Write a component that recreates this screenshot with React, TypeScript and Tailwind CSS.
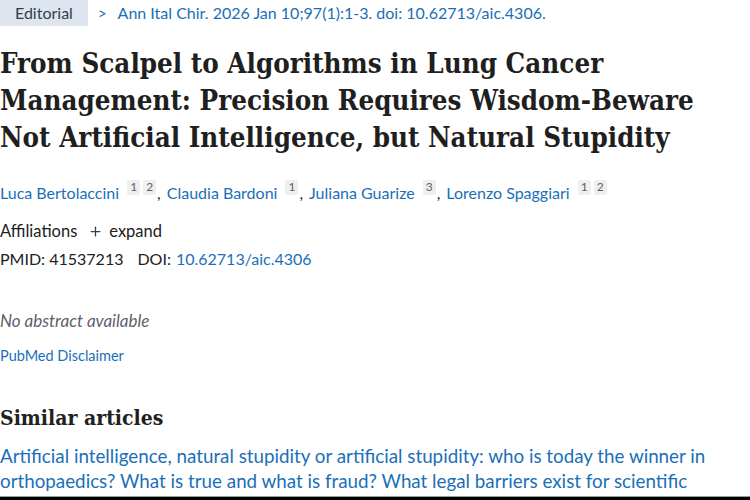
import { Plus } from 'lucide-react';

const authors = [
  { name: 'Luca Bertolaccini', refs: ['1', '2'] },
  { name: 'Claudia Bardoni', refs: ['1'] },
  { name: 'Juliana Guarize', refs: ['3'] },
  { name: 'Lorenzo Spaggiari', refs: ['1', '2'] },
];

function Sup({ n, first }: { n: string; first: boolean }) {
  return (
    <span
      className={`inline-flex items-center justify-center w-[13px] h-[15px] ${first ? 'ml-[8px]' : 'ml-[3px]'} bg-[#efefef] text-[#5b616b] text-[12px] leading-none rounded-[2px] relative -top-[6px]`}
    >
      {n}
    </span>
  );
}

export default function App() {
  return (
    <div className="relative w-[750px] h-[500px] overflow-hidden bg-white text-[#212121] font-['Lato','Liberation_Sans',sans-serif]">
      <div className="flex items-center h-[26px] text-[16px]">
        <span className="h-full flex items-center px-[15px] bg-[#dfe5ee] text-[#2f3e4f]">Editorial</span>
        <span className="ml-[10px] text-[#1a6fb8] flex items-center">
          <span className="mr-[11px] text-[15px]">&gt;</span>
          Ann Ital Chir. 2026 Jan 10;97(1):1-3. doi: 10.62713/aic.4306.
        </span>
      </div>

      <h1 className="mt-[19px] font-['DejaVu_Serif_Condensed','DejaVu_Serif',serif] [font-stretch:condensed] font-bold text-[27.5px] leading-[37px] text-[#1f1f1f]">
        From Scalpel to Algorithms in Lung Cancer
        <br />
        Management: Precision Requires Wisdom-Beware
        <br />
        Not Artificial Intelligence, but Natural Stupidity
      </h1>

      <div className="mt-[25px] text-[16px] text-[#1a6fb8] flex items-center">
        {authors.map((a, i) => (
          <span key={a.name} className="flex items-center">
            <span>{a.name}</span>
            {a.refs.map((r, j) => (
              <Sup key={r} n={r} first={j === 0} />
            ))}
            {i < authors.length - 1 && <span className="text-[#212121] ml-[1px] mr-[6px]">,</span>}
          </span>
        ))}
      </div>

      <div className="mt-[14px] flex items-center text-[16.5px] leading-[24px]">
        <span>Affiliations</span>
        <Plus className="ml-[11px] mr-[6px] w-[15px] h-[15px] text-[#3d3d3d]" strokeWidth={2} />
        <span>expand</span>
      </div>

      <div className="mt-[4px] flex items-center text-[16px] leading-[24px]">
        <span>PMID: 41537213</span>
        <span className="ml-[14px]">DOI:</span>
        <span className="ml-[5px] text-[#1a6fb8]">10.62713/aic.4306</span>
      </div>

      <p className="mt-[38px] italic text-[17px] leading-[24px] text-[#5b616b]">No abstract available</p>

      <p className="mt-[13px] text-[14.5px] leading-[20px] text-[#1a6fb8]">PubMed Disclaimer</p>

      <h2 className="mt-[37px] font-['DejaVu_Serif_Condensed','DejaVu_Serif',serif] [font-stretch:condensed] font-bold text-[21px] leading-[30px]">
        Similar articles
      </h2>

      <p className="mt-[10px] text-[18.8px] leading-[25px] text-[#1a6fb8] w-[740px]">
        Artificial intelligence, natural stupidity or artificial stupidity: who is today the winner in orthopaedics? What is true and what is fraud? What legal barriers exist for scientific
      </p>

      <div className="absolute left-0 right-0 bottom-0 h-[4px] bg-black border-t border-[#9a9a9a]" />
    </div>
  );
}
